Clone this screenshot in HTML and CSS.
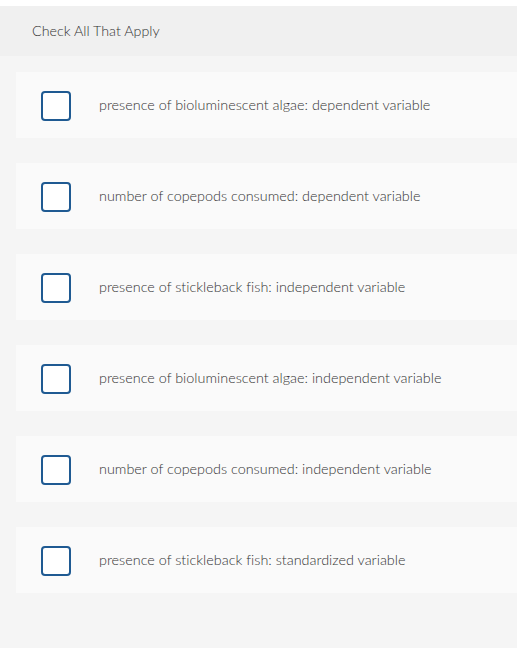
FILE: index.html
```html
<!DOCTYPE html>
<html>
<head>
<meta charset="utf-8">
<link rel="stylesheet" href="styles.css">
</head>
<body>
<div class="question">
  <div class="header">Check All That Apply</div>
  <div class="options">
    <label class="option"><span class="box"></span><span class="text">presence of bioluminescent algae: dependent variable</span></label>
    <label class="option"><span class="box"></span><span class="text">number of copepods consumed: dependent variable</span></label>
    <label class="option"><span class="box"></span><span class="text">presence of stickleback fish: independent variable</span></label>
    <label class="option"><span class="box"></span><span class="text">presence of bioluminescent algae: independent variable</span></label>
    <label class="option"><span class="box"></span><span class="text">number of copepods consumed: independent variable</span></label>
    <label class="option"><span class="box"></span><span class="text">presence of stickleback fish: standardized variable</span></label>
  </div>
</div>
</body>
</html>
```
FILE: styles.css
```css
html, body {
  margin: 0;
  padding: 0;
  background: #ffffff;
}
body {
  padding-top: 6px;
  font-family: "Lato", "Open Sans", sans-serif;
  font-variant-ligatures: none;
}
.question {
  width: 517px;
}
.header {
  background: #f0f0f0;
  height: 50px;
  box-sizing: border-box;
  padding-left: 32px;
  padding-bottom: 2px;
  display: flex;
  align-items: center;
  font-size: 14.3px;
  font-weight: 300;
  color: #333333;
}
.options {
  background: #f5f5f5;
  padding: 16px 0 55px 16px;
  display: flex;
  flex-direction: column;
  gap: 25px;
}
.option {
  background: #fafafa;
  height: 66px;
  display: flex;
  align-items: center;
  padding-left: 25px;
}
.box {
  width: 30px;
  height: 30px;
  box-sizing: border-box;
  border: 2px solid #1f5a92;
  border-radius: 4px;
  background: #ffffff;
  flex: none;
  margin-top: 1px;
}
.text {
  margin-left: 28px;
  margin-bottom: 2px;
  font-size: 14.4px;
  font-weight: 300;
  color: #333333;
}
```
